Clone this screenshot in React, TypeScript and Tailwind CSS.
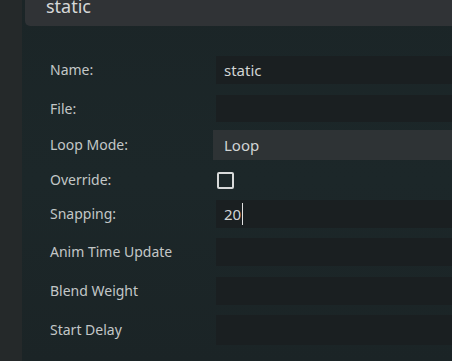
import React from "react";

const font = { fontFamily: '"Noto Sans", "Open Sans", sans-serif' };

function Label({ children }: { children: React.ReactNode }) {
  return (
    <div className="w-[166px] shrink-0 text-[14px] text-[#c3c7c7] leading-none">{children}</div>
  );
}

function Input({ value, caret, h = "h-[28px]" }: { value?: string; caret?: boolean; h?: string }) {
  return (
    <div className={`flex-1 ${h} bg-[#1a1f21] flex items-center pl-[8px] text-[15px] text-[#d2d5d5]`}>
      {value}
      {caret && <span className="inline-block w-px h-[22px] bg-[#e0e0e0] ml-px" />}
    </div>
  );
}

export default function App() {
  return (
    <div className="w-[452px] h-[361px] overflow-hidden flex bg-[#25292a]" style={font}>
      <div className="w-[22px] shrink-0 bg-[#25292a]" />
      <div className="flex-1 flex flex-col bg-gradient-to-b from-[#1b2527] via-[#1c2729] to-[#1b2426]">
        <div className="ml-[3px] h-[26px] shrink-0 bg-[#303336] rounded-bl-[5px] flex items-end pl-[21px] pb-[11px]">
          <span className="text-[18px] leading-none text-[#d6d8d8]">static</span>
        </div>
        <div className="flex flex-col pl-[28px]">
          <div className="mt-[30px] flex items-center h-[28px]">
            <Label>Name:</Label>
            <Input value="static" />
          </div>
          <div className="mt-[11px] flex items-center h-[27px]">
            <Label>File:</Label>
            <Input h="h-[27px]" />
          </div>
          <div className="mt-[8px] flex items-center h-[30px]">
            <Label>Loop Mode:</Label>
            <div className="flex-1 h-[30px] -ml-[3px] bg-[#2e3335] flex items-center pl-[11px] text-[15px] text-[#d2d5d5]">Loop</div>
          </div>
          <div className="flex items-center h-[40px]">
            <Label>Override:</Label>
            <div className="ml-px w-[17px] h-[17px] rounded-[2px] border-2 border-[#d8dada]" />
          </div>
          <div className="flex items-center h-[28px]">
            <Label>Snapping:</Label>
            <Input value="20" caret />
          </div>
          <div className="mt-[10px] flex items-center h-[28px]">
            <Label>Anim Time Update</Label>
            <Input />
          </div>
          <div className="mt-[11px] flex items-center h-[28px]">
            <Label>Blend Weight</Label>
            <Input />
          </div>
          <div className="mt-[10px] flex items-center h-[30px]">
            <Label>Start Delay</Label>
            <Input h="h-[30px]" />
          </div>
        </div>
      </div>
    </div>
  );
}
